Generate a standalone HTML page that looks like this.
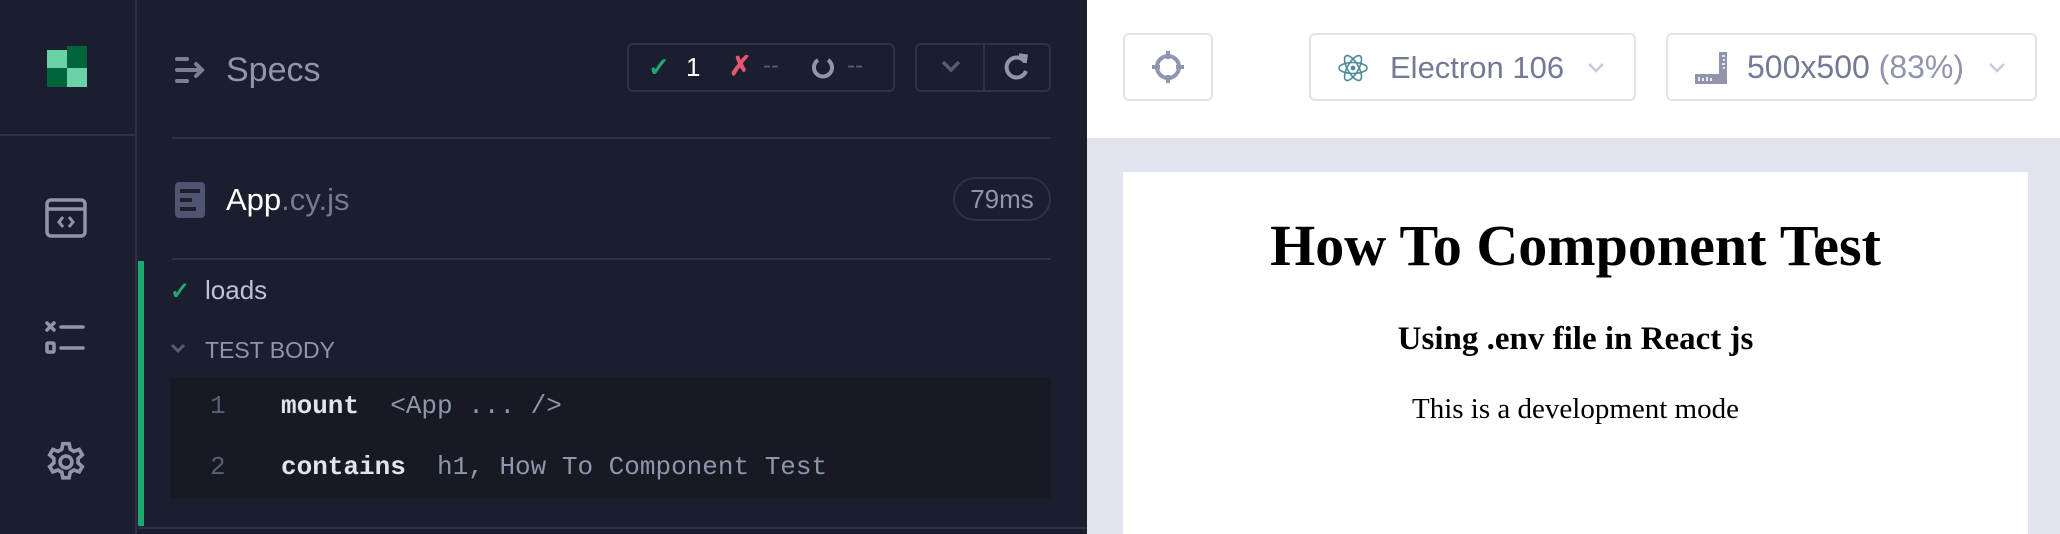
<!DOCTYPE html>
<html><head><meta charset="utf-8"><style>
*{margin:0;padding:0;box-sizing:border-box}
body{width:2060px;height:534px;overflow:hidden;background:#1b1e2e;font-family:"Liberation Sans",sans-serif;position:relative}
.a{position:absolute}
.mono{font-family:"Liberation Mono",monospace}
</style></head><body>
<!-- sidebar -->
<div class="a" style="left:0;top:0;width:137px;height:534px;background:#1b1e2e;border-right:2px solid #2e3247"></div>
<div class="a" style="left:0;top:134px;width:137px;height:2px;background:#2e3247"></div>
<svg class="a" style="left:45px;top:44px" width="44" height="44" viewBox="0 0 44 44">
<rect x="2" y="6" width="20" height="19" fill="#69d3a7"/><rect x="22" y="2" width="20" height="22" fill="#00643a"/>
<rect x="2" y="24" width="20" height="19" fill="#00643a"/><rect x="22" y="24" width="20" height="19" fill="#69d3a7"/></svg>
<svg class="a" style="left:44px;top:196px" width="44" height="44" viewBox="0 0 44 44" fill="none" stroke="#9095ad" stroke-width="3.5">
<rect x="3" y="4" width="38" height="36" rx="4"/><line x1="3" y1="13" x2="41" y2="13"/><path d="M19 21l-4 5 4 5M25 21l4 5-4 5" stroke-width="3"/></svg>
<svg class="a" style="left:44px;top:320px" width="44" height="40" viewBox="0 0 44 40" fill="none" stroke="#9095ad" stroke-width="3.5" stroke-linecap="round">
<path d="M3 3l7 7M10 3l-7 7M17 7h22M17 28h22"/><rect x="3" y="23" width="7" height="9" rx="1"/></svg>
<svg class="a" style="left:44px;top:440px" width="44" height="44" viewBox="0 0 24 24" fill="none" stroke="#9095ad" stroke-width="2"><path d="M10.3 2h3.4l.6 3 2 1.2 2.9-1 1.7 2.9-2.3 2v2.4l2.3 2-1.7 2.9-2.9-1-2 1.2-.6 3h-3.4l-.6-3-2-1.2-2.9 1-1.7-2.9 2.3-2V10.1l-2.3-2 1.7-2.9 2.9 1 2-1.2z"/><circle cx="12" cy="12" r="3.2"/></svg>

<!-- specs header -->
<svg class="a" style="left:174px;top:56px" width="34" height="28" viewBox="0 0 34 28" stroke="#7a7f98" stroke-width="4" stroke-linecap="round" fill="none"><path d="M3 3h10M3 14h14M3 25h10M22 8l6 6-6 6M16 14h12" /></svg>
<div class="a" style="left:226px;top:51px;font-size:34px;color:#9095ad">Specs</div>
<div class="a" style="left:627px;top:43px;width:268px;height:49px;border:2px solid #2e3247;border-radius:6px"></div>
<div class="a" style="left:648px;top:52px;font-size:26px;color:#1fa971;font-weight:bold">✓</div>
<div class="a" style="left:686px;top:52px;font-size:26px;color:#fff">1</div>
<div class="a" style="left:729px;top:51px;font-size:27px;color:#e45770;font-weight:bold">✗</div>
<div class="a" style="left:763px;top:52px;font-size:24px;color:#565a75">--</div>
<svg class="a" style="left:812px;top:56px" width="22" height="24" viewBox="0 0 22 24" fill="none" stroke="#9095ad" stroke-width="4"><path d="M6 4a9 9 0 1 0 10 0"/></svg>
<div class="a" style="left:847px;top:52px;font-size:24px;color:#565a75">--</div>
<div class="a" style="left:915px;top:43px;width:136px;height:49px;border:2px solid #2e3247;border-radius:6px"></div>
<div class="a" style="left:983px;top:43px;width:2px;height:49px;background:#2e3247"></div>
<svg class="a" style="left:941px;top:60px" width="20" height="14" viewBox="0 0 20 14" fill="none" stroke="#565a75" stroke-width="3.5"><path d="M2 2l8 8 8-8"/></svg>
<svg class="a" style="left:1003px;top:52px" width="28" height="30" viewBox="0 0 28 30" fill="none" stroke="#9095ad" stroke-width="4"><path d="M22 10a10 10 0 1 0 1 9"/><path d="M16 3l7 1-1 7" stroke-width="3.5"/></svg>
<div class="a" style="left:172px;top:137px;width:879px;height:2px;background:#2e3247"></div>

<!-- file row -->
<svg class="a" style="left:174px;top:181px" width="32" height="38" viewBox="0 0 32 38"><rect x="1" y="1" width="30" height="36" rx="4" fill="#4f5470"/><rect x="6" y="8" width="20" height="4" fill="#1b1e2e"/><rect x="6" y="17" width="12" height="4" fill="#1b1e2e"/><rect x="6" y="26" width="16" height="4" fill="#1b1e2e"/></svg>
<div class="a" style="left:226px;top:182px;font-size:31px;color:#fff">App<span style="color:#747994">.cy.js</span></div>
<div class="a" style="left:953px;top:177px;width:98px;height:44px;border:2px solid #2e3247;border-radius:22px;color:#9095ad;font-size:26px;text-align:center;line-height:40px">79ms</div>
<div class="a" style="left:172px;top:258px;width:879px;height:2px;background:#2e3247"></div>

<!-- test -->
<div class="a" style="left:138px;top:261px;width:6px;height:265px;background:#1fa971"></div>
<div class="a" style="left:170px;top:277px;font-size:24px;color:#1fa971;font-weight:bold">✓</div>
<div class="a" style="left:205px;top:275px;font-size:26px;color:#bfc2d4">loads</div>
<svg class="a" style="left:170px;top:343px" width="16" height="12" viewBox="0 0 16 12" fill="none" stroke="#565a75" stroke-width="3"><path d="M2 2l6 6 6-6"/></svg>
<div class="a" style="left:205px;top:337px;font-size:23px;color:#9095ad">TEST BODY</div>
<div class="a" style="left:170px;top:378px;width:881px;height:121px;background:#171923"></div>
<div class="a mono" style="left:210px;top:391px;font-size:26px;color:#5a5e78">1</div>
<div class="a mono" style="left:281px;top:391px;font-size:26px;color:#e1e3ed;font-weight:bold;white-space:pre">mount <span style="color:#9095ad;font-weight:normal"> &lt;App ... /&gt;</span></div>
<div class="a mono" style="left:210px;top:452px;font-size:26px;color:#5a5e78">2</div>
<div class="a mono" style="left:281px;top:452px;font-size:26px;color:#e1e3ed;font-weight:bold;white-space:pre">contains <span style="color:#9095ad;font-weight:normal"> h1, How To Component Test</span></div>
<div class="a" style="left:138px;top:527px;width:950px;height:2px;background:#2e3247"></div>

<!-- right panel -->
<div class="a" style="left:1087px;top:0;width:973px;height:534px;background:#e1e3ed"></div>
<div class="a" style="left:1087px;top:0;width:973px;height:138px;background:#fff"></div>
<div class="a" style="left:1123px;top:33px;width:90px;height:68px;border:2px solid #e1e3ed;border-radius:6px"></div>
<svg class="a" style="left:1150px;top:49px" width="36" height="36" viewBox="0 0 36 36" fill="none" stroke="#9095ad" stroke-width="4"><circle cx="18" cy="18" r="11"/><path d="M18 2v8M18 26v8M2 18h8M26 18h8"/></svg>
<div class="a" style="left:1309px;top:33px;width:327px;height:68px;border:2px solid #e1e3ed;border-radius:6px"></div>
<svg class="a" style="left:1337px;top:51px" width="32" height="34" viewBox="0 0 32 34" fill="none" stroke="#4c8a98" stroke-width="1.6"><ellipse cx="16" cy="17" rx="14" ry="5.5"/><ellipse cx="16" cy="17" rx="14" ry="5.5" transform="rotate(60 16 17)"/><ellipse cx="16" cy="17" rx="14" ry="5.5" transform="rotate(120 16 17)"/><circle cx="16" cy="17" r="1.6" fill="#4c8a98"/></svg>
<div class="a" style="left:1390px;top:50px;font-size:31px;color:#747994">Electron 106</div>
<svg class="a" style="left:1587px;top:62px" width="18" height="12" viewBox="0 0 18 12" fill="none" stroke="#c8cad9" stroke-width="2.5"><path d="M2 2l7 7 7-7"/></svg>
<div class="a" style="left:1666px;top:33px;width:371px;height:68px;border:2px solid #e1e3ed;border-radius:6px"></div>
<svg class="a" style="left:1693px;top:50px" width="36" height="36" viewBox="0 0 36 36"><path d="M26 2h8v32H2v-10h24z" fill="#9095ad"/><path d="M6 27v4M10 28v3M14 27v4M18 28v3M29 6h3M30 10h2M29 14h3M30 18h2" stroke="#fff" stroke-width="1.6"/></svg>
<div class="a" style="left:1747px;top:49px;font-size:32px;color:#747994">500x500 <span style="color:#9095ad">(83%)</span></div>
<svg class="a" style="left:1988px;top:62px" width="18" height="12" viewBox="0 0 18 12" fill="none" stroke="#c8cad9" stroke-width="2.5"><path d="M2 2l7 7 7-7"/></svg>

<div class="a" style="left:1123px;top:172px;width:905px;height:362px;background:#fff;font-family:'Liberation Serif',serif;color:#000;text-align:center">
<div style="font-size:58px;font-weight:bold;margin-top:40px;line-height:68px">How To Component Test</div>
<div style="font-size:33px;font-weight:bold;margin-top:39px;line-height:40px">Using .env file in React js</div>
<div style="font-size:29px;margin-top:32px;line-height:36px">This is a development mode</div>
</div>
</body></html>
